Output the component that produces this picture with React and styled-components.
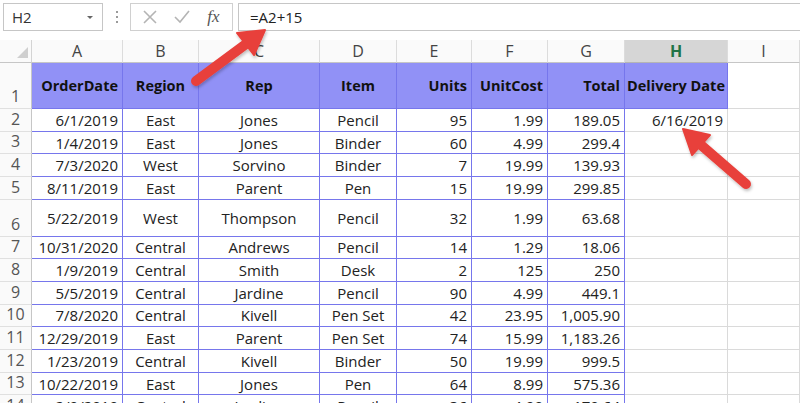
import React from 'react'
import styled, { createGlobalStyle } from 'styled-components'

const GlobalStyle = createGlobalStyle`
  html, body {
    margin: 0;
    padding: 0;
    background: #fff;
  }
  body {
    font-family: "Open Sans", "Liberation Sans", sans-serif;
  }
`

const Page = styled.div`
  position: relative;
  width: 800px;
  height: 403px;
  overflow: hidden;
  background: #fff;
`

const FormulaBar = styled.div`
  display: flex;
  align-items: stretch;
  height: 28px;
  padding: 3px 0 0 3px;
`

const NameBox = styled.div`
  box-sizing: border-box;
  width: 100px;
  display: flex;
  align-items: center;
  justify-content: space-between;
  padding: 0 9px 0 8px;
  border: 1px solid #c6c6c6;
  font-size: 15px;
  color: #333;
`

const Caret = styled.span`
  width: 0;
  height: 0;
  border-left: 3px solid transparent;
  border-right: 3px solid transparent;
  border-top: 3px solid #666;
`

const Dots = styled.div`
  width: 27px;
  display: flex;
  flex-direction: column;
  align-items: center;
  justify-content: center;
  gap: 3px;

  span {
    width: 2px;
    height: 2px;
    background: #9a9a9a;
  }
`

const ButtonBox = styled.div`
  box-sizing: border-box;
  width: 103px;
  display: flex;
  align-items: center;
  justify-content: space-around;
  padding: 0 4px;
  border: 1px solid #d0d0d0;
`

const Fx = styled.span`
  font-family: "Liberation Serif", serif;
  font-style: italic;
  font-size: 17px;
  color: #555;
`

const FormulaInput = styled.div`
  flex: 1;
  margin-left: 5px;
  display: flex;
  align-items: center;
  padding-left: 11px;
  border: 1px solid #c6c6c6;
  border-right: none;
  font-size: 15px;
  color: #222;
`

const Sheet = styled.div`
  display: grid;
  grid-template-columns: 32px 91px 76px 121px 77px 75px 76px 77px 103px 72px;
  grid-template-rows: 23px 46px repeat(4, 22.7px) 36.8px repeat(8, 22.7px);
  margin-top: 9px;
`

const Corner = styled.div`
  position: relative;
  border-right: 1px solid #d4d4d4;
  border-bottom: 1px solid #c6c6c6;
  background: #fafafa;

  &::after {
    content: '';
    position: absolute;
    right: 3px;
    bottom: 4px;
    width: 0;
    height: 0;
    border-left: 11px solid transparent;
    border-bottom: 11px solid #cfcfcf;
  }
`

const ColHead = styled.div`
  display: flex;
  align-items: center;
  justify-content: center;
  background: ${p => (p.$active ? '#d6d6d6' : '#fafafa')};
  border-right: 1px solid #dcdcdc;
  border-bottom: 1px solid ${p => (p.$active ? '#b5b5b5' : '#c6c6c6')};
  font-size: 16px;
  font-weight: ${p => (p.$active ? 700 : 400)};
  color: ${p => (p.$active ? '#217346' : '#444')};
`

const RowHead = styled.div`
  display: flex;
  align-items: flex-end;
  justify-content: center;
  padding-bottom: 1px;
  background: #fafafa;
  border-right: 1px solid #c6c6c6;
  border-bottom: 1px solid #e0e0e0;
  font-size: 16px;
  color: #555;
`

const Cell = styled.div`
  box-sizing: border-box;
  display: flex;
  align-items: center;
  justify-content: ${p =>
    p.$align === 'right' ? 'flex-end' : p.$align === 'left' ? 'flex-start' : 'center'};
  padding: 0 4px;
  min-width: 0;
  white-space: nowrap;
  background: ${p => (p.$head ? '#9191f6' : '#fff')};
  border-right: 1px solid ${p => (p.$plain ? '#dadada' : '#7676ec')};
  border-bottom: 1px solid ${p => (p.$plain ? '#dadada' : '#7676ec')};
  font-size: ${p => (p.$head ? '14.5px' : '15px')};
  font-weight: ${p => (p.$head ? 700 : 400)};
  color: ${p => (p.$head ? '#111' : '#222')};
`

const Arrows = styled.svg`
  position: absolute;
  top: 0;
  left: 0;
  pointer-events: none;
`

const letters = ['A', 'B', 'C', 'D', 'E', 'F', 'G', 'H', 'I']

const columns = [
  { title: 'OrderDate', head: 'right', align: 'right' },
  { title: 'Region', head: 'center', align: 'center' },
  { title: 'Rep', head: 'center', align: 'center' },
  { title: 'Item', head: 'center', align: 'center' },
  { title: 'Units', head: 'right', align: 'right' },
  { title: 'UnitCost', head: 'right', align: 'right' },
  { title: 'Total', head: 'right', align: 'right' },
]

const rows = [
  ['6/1/2019', 'East', 'Jones', 'Pencil', '95', '1.99', '189.05'],
  ['1/4/2019', 'East', 'Jones', 'Binder', '60', '4.99', '299.4'],
  ['7/3/2020', 'West', 'Sorvino', 'Binder', '7', '19.99', '139.93'],
  ['8/11/2019', 'East', 'Parent', 'Pen', '15', '19.99', '299.85'],
  ['5/22/2019', 'West', 'Thompson', 'Pencil', '32', '1.99', '63.68'],
  ['10/31/2020', 'Central', 'Andrews', 'Pencil', '14', '1.29', '18.06'],
  ['1/9/2019', 'Central', 'Smith', 'Desk', '2', '125', '250'],
  ['5/5/2019', 'Central', 'Jardine', 'Pencil', '90', '4.99', '449.1'],
  ['7/8/2020', 'Central', 'Kivell', 'Pen Set', '42', '23.95', '1,005.90'],
  ['12/29/2019', 'East', 'Parent', 'Pen Set', '74', '15.99', '1,183.26'],
  ['1/23/2019', 'Central', 'Kivell', 'Binder', '50', '19.99', '999.5'],
  ['10/22/2019', 'East', 'Jones', 'Pen', '64', '8.99', '575.36'],
  ['2/9/2019', 'Central', 'Jardine', 'Pencil', '36', '4.99', '179.64'],
]

const Arrow = ({ tail, tip, wingA, wingB, base }) => (
  <g>
    <line
      x1={tail[0]} y1={tail[1]} x2={base[0]} y2={base[1]}
      stroke="#e8413b" strokeWidth="10" strokeLinecap="round"
    />
    <polygon
      points={`${tip.join(',')} ${wingA.join(',')} ${wingB.join(',')}`}
      fill="#e8413b" stroke="#e8413b" strokeWidth="2" strokeLinejoin="round"
    />
  </g>
)

export default function App() {
  return (
    <Page>
      <GlobalStyle />
      <FormulaBar>
        <NameBox>
          H2
          <Caret />
        </NameBox>
        <Dots>
          <span />
          <span />
          <span />
        </Dots>
        <ButtonBox>
          <svg width="14" height="14" viewBox="0 0 14 14">
            <path d="M1 1 L13 13 M13 1 L1 13" stroke="#b4b4b4" strokeWidth="1.6" fill="none" />
          </svg>
          <svg width="16" height="14" viewBox="0 0 16 14">
            <path d="M1 7 L6 12 L15 1" stroke="#b4b4b4" strokeWidth="1.6" fill="none" />
          </svg>
          <Fx>fx</Fx>
        </ButtonBox>
        <FormulaInput>=A2+15</FormulaInput>
      </FormulaBar>

      <Sheet>
        <Corner />
        {letters.map(l => (
          <ColHead key={l} $active={l === 'H'}>{l}</ColHead>
        ))}

        <RowHead>1</RowHead>
        {columns.map(c => (
          <Cell key={c.title} $head $align={c.head}>{c.title}</Cell>
        ))}
        <Cell $head $align="center">Delivery Date</Cell>
        <Cell $plain />

        {rows.map((r, i) => (
          <React.Fragment key={i}>
            <RowHead>{i + 2}</RowHead>
            {r.map((v, j) => (
              <Cell key={j} $align={columns[j].align}>{v}</Cell>
            ))}
            <Cell $plain $align="right">{i === 0 ? '6/16/2019' : ''}</Cell>
            <Cell $plain />
          </React.Fragment>
        ))}
      </Sheet>

      <Arrows width="800" height="403" viewBox="0 0 800 403">
        <defs>
          <filter id="shadow" x="-20%" y="-20%" width="140%" height="140%">
            <feDropShadow dx="1" dy="2" stdDeviation="1.5" floodColor="#000" floodOpacity="0.25" />
          </filter>
        </defs>
        <g filter="url(#shadow)">
          <Arrow
            tail={[196, 81]} tip={[265, 30]} base={[246, 44]}
            wingA={[254, 55]} wingB={[237, 33]}
          />
          <Arrow
            tail={[746, 184]} tip={[683, 129]} base={[701, 145]}
            wingA={[710, 135]} wingB={[692, 155]}
          />
        </g>
      </Arrows>
    </Page>
  )
}
